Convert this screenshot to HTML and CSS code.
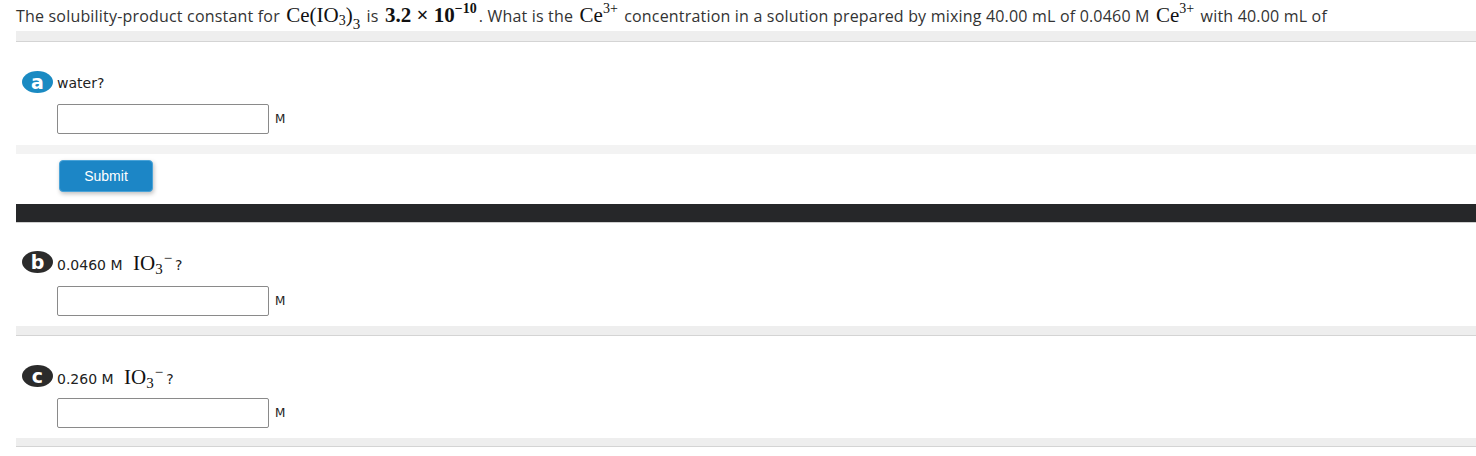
FILE: index.html
```html
<!DOCTYPE html>
<html>
<head>
<meta charset="utf-8">
<link rel="stylesheet" href="styles.css">
</head>
<body>
<div class="page">
  <p class="question">The solubility-product constant for <span class="math">Ce(IO<sub>3</sub>)<sub class="big">3</sub></span> is <span class="math bold">3.2 × 10<sup>−10</sup></span>. What is the <span class="math">Ce<sup>3+</sup></span> concentration in a solution prepared by mixing 40.00 mL of 0.0460 M <span class="math">Ce<sup>3+</sup></span> with 40.00 mL of</p>
  <div class="bar bar-lined"></div>

  <div class="part part-a">
    <div class="part-head"><span class="badge badge-blue">a</span><span class="prompt">water?</span></div>
    <div class="answer-row"><input class="answer" type="text"><span class="unit">M</span></div>
  </div>
  <div class="bar bar-light"></div>
  <div class="submit-row"><button class="submit">Submit</button></div>
  <div class="dark-bar"></div>

  <div class="part part-b">
    <div class="part-head"><span class="badge badge-dark">b</span><span class="prompt">0.0460 M <span class="math chem">IO<sub>3</sub><sup>−</sup></span>?</span></div>
    <div class="answer-row"><input class="answer" type="text"><span class="unit">M</span></div>
  </div>
  <div class="bar bar-lined bar-after"></div>

  <div class="part part-c">
    <div class="part-head"><span class="badge badge-dark">c</span><span class="prompt">0.260 M <span class="math chem">IO<sub>3</sub><sup>−</sup></span>?</span></div>
    <div class="answer-row"><input class="answer" type="text"><span class="unit">M</span></div>
  </div>
  <div class="bar bar-lined bar-after bar-last"></div>
</div>
</body>
</html>
```
FILE: styles.css
```css
html, body {
  margin: 0;
  padding: 0;
  background: #fff;
}
.page {
  display: flex;
  flex-direction: column;
  padding-left: 16px;
}
.question {
  margin: 0;
  height: 31px;
  line-height: 30px;
  font-family: "Open Sans", sans-serif;
  font-size: 16px;
  letter-spacing: 0.19px;
  color: #333;
  white-space: nowrap;
  padding-top: 0;
  box-sizing: border-box;
}
.math {
  font-family: "Liberation Serif", "DejaVu Serif", serif;
  font-size: 21px;
  letter-spacing: 0;
  color: #111;
}
.question .math {
  margin: 0 2px;
}
.math.bold {
  font-weight: bold;
}
.math sub, .math sup {
  font-size: 14px;
  line-height: 0;
}
.math sub {
  vertical-align: -3px;
}
.math sub.big {
  vertical-align: -7px;
  font-size: 15px;
}
.math sup {
  vertical-align: 9px;
}
.bar {
  height: 10px;
  background: #eeeeee;
}
.bar-lined {
  border-bottom: 1px solid #d4d4d4;
}
.bar-after {
  margin-top: 10px;
  height: 9px;
}
.bar-light {
  height: 9px;
  background: #f3f3f3;
  margin-top: 11px;
}
.part {
  display: flex;
  flex-direction: column;
}
.part-a {
  margin-top: 29px;
}
.part-b {
  margin-top: 28px;
}
.part-c {
  margin-top: 29px;
}
.part-head {
  display: flex;
  align-items: center;
  height: 22px;
  padding-left: 6px;
}
.badge {
  width: 31px;
  height: 22px;
  border-radius: 50%;
  color: #fff;
  font-family: "DejaVu Sans", Verdana, sans-serif;
  font-weight: bold;
  font-size: 19px;
  line-height: 22px;
  text-align: center;
  margin-right: 4px;
}
.badge-blue {
  background: #1a8ac2;
}
.badge-dark {
  background: #2b2b2b;
}
.prompt {
  font-family: "DejaVu Sans", Verdana, sans-serif;
  font-size: 14px;
  color: #222;
  padding-top: 2px;
}
.prompt .chem {
  font-size: 21px;
  color: #111;
  margin-left: 6px;
}
.chem sub {
  font-size: 15px;
  vertical-align: -4px;
}
.chem sup {
  font-size: 15px;
  vertical-align: 7px;
  margin-left: 1px;
  margin-right: 3px;
}
.answer-row {
  display: flex;
  align-items: center;
  padding-left: 41px;
  margin-top: 11px;
  height: 30px;
}
.part-b .answer-row {
  margin-top: 13px;
}
.part-c .answer-row {
  margin-top: 11px;
}
.answer {
  width: 212px;
  height: 30px;
  box-sizing: border-box;
  border: 1px solid #8a8a8a;
  border-radius: 2px;
  margin: 0;
  padding: 0 4px;
  background: #fff;
}
.unit {
  font-family: "DejaVu Sans", Verdana, sans-serif;
  font-size: 12px;
  color: #222;
  margin-left: 6px;
}
.submit-row {
  padding-left: 43px;
  margin-top: 6px;
}
.submit {
  width: 94px;
  height: 32px;
  border: 1px solid #4aa3d8;
  border-radius: 4px;
  background: #1c86c6;
  color: #fff;
  font-family: "Liberation Sans", Arial, sans-serif;
  font-size: 14px;
  box-shadow: 1px 2px 4px rgba(0,0,0,0.25);
  padding: 0;
}
.dark-bar {
  margin-top: 12px;
  height: 18px;
  background: #262729;
  border-bottom: 1px solid #cfcfcf;
}
.bar-last {
  height: 8px;
}
```
